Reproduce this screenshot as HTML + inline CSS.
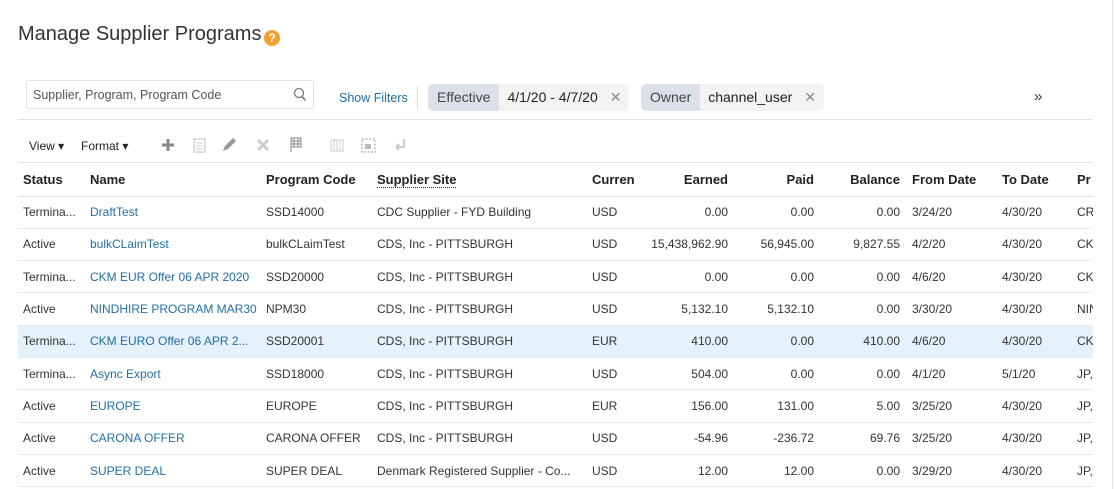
<!DOCTYPE html>
<html><head><meta charset="utf-8"><style>
*{box-sizing:border-box;margin:0;padding:0}
body{width:1115px;height:489px;overflow:hidden;background:#fff;font-family:"Liberation Sans",Arial,sans-serif;color:#333;position:relative;font-size:12px}
.abs{position:absolute;white-space:nowrap}
h1{position:absolute;left:18px;top:23px;font-size:20px;font-weight:normal;color:#333}
.help{position:absolute;left:264px;top:30px;width:16px;height:16px;border-radius:50%;background:#f0a030;color:#fff;font-size:12px;font-weight:bold;text-align:center;line-height:16px}
.search{position:absolute;left:26px;top:80px;width:288px;height:29px;border:1px solid #dde3e8;border-radius:3px;font-size:12.5px;color:#555;padding:7px 6px}
.chip{position:absolute;top:84px;height:27px;font-size:14px;line-height:27px;border-radius:5px;overflow:hidden;display:flex}
.chip .k{background:#dbe1e6;padding:0 9px;color:#444}
.chip .v{background:#f3f3f3;padding:0 8px;color:#222}
.chip .x{color:#888;margin-left:12px}
.hr{position:absolute;height:1px;background:#dde2e6}
table{position:absolute;left:18px;top:164px;border-collapse:collapse;width:1075px;table-layout:fixed}
th{font-weight:bold;font-size:13px;text-align:left;height:32px;color:#222;border-bottom:1px solid #dde2e6;padding:0 5px}
td{font-size:12px;height:32.3px;border-bottom:1px solid #e8ebee;padding:0 5px;white-space:nowrap;overflow:hidden;color:#333}
td.r,th.r{text-align:right;padding-right:2px}
th.d,td.d{padding-left:10px}
td a{color:#1f6fa8}
tr.hl td{background:#e5f1fb}
</style></head><body>
<h1>Manage Supplier Programs</h1><div class="help">?</div>
<div class="search">Supplier, Program, Program Code
<svg style="position:absolute;right:6px;top:6px" width="14" height="15" viewBox="0 0 14 15"><circle cx="6" cy="6" r="4.5" fill="none" stroke="#777" stroke-width="1.3"/><path d="M9 9.5l3.5 4" stroke="#777" stroke-width="1.6"/></svg></div>
<div class="abs" style="left:339px;top:91px;font-size:12.5px;color:#1f6fa8">Show Filters</div>
<div class="abs" style="left:417px;top:86px;width:1px;height:24px;background:#ddd"></div>
<div class="chip" style="left:428px"><span class="k">Effective</span><span class="v">4/1/20 - 4/7/20<span class="x">✕</span></span></div>
<div class="chip" style="left:641px"><span class="k">Owner</span><span class="v">channel_user<span class="x">✕</span></span></div>
<div class="abs" style="left:1034px;top:88px;font-size:15px;color:#333">»</div>
<div class="hr" style="left:18px;top:119px;width:1075px"></div>
<div class="abs" style="left:1112px;top:0;width:1px;height:489px;background:#e3e3e3"></div>
<div class="abs" style="left:29px;top:139px;font-size:12px;color:#222">View ▾</div>
<div class="abs" style="left:81px;top:139px;font-size:12px;color:#222">Format ▾</div>
<svg class="abs" style="left:160px;top:137px" width="260" height="16" viewBox="0 0 260 16">
<path d="M8 2v12M2 8h12" stroke="#888" stroke-width="3"/>
<rect x="34" y="2" width="11" height="13" fill="none" stroke="#ccc" stroke-width="1.3"/><path d="M36 6h7M36 9h7M36 12h7" stroke="#ccc"/>
<path d="M63 14l2-5 8-8 3 3-8 8z" fill="#999"/>
<path d="M98 3l10 10M108 3l-10 10" stroke="#ccc" stroke-width="3"/>
<rect x="131" y="1" width="10" height="9" fill="none" stroke="#888"/><path d="M131 4h10M131 7h10M134 1v9M138 1v9M131 15l0-5" stroke="#888"/>
<rect x="171" y="3" width="12" height="11" fill="none" stroke="#ccc"/><path d="M174 3v11M177 3v11M180 3v11" stroke="#ccc"/>
<rect x="202" y="2" width="13" height="13" fill="none" stroke="#999" stroke-dasharray="2 1.5"/><rect x="205" y="7" width="6" height="5" fill="#bbb"/>
<path d="M244 2v8h-8M236 10l3-3M236 10l3 3" stroke="#ccc" stroke-width="2" fill="none"/>
</svg>
<div class="hr" style="left:18px;top:162px;width:1075px"></div>
<table>
<colgroup><col style="width:67px"><col style="width:176px"><col style="width:111px"><col style="width:215px"><col style="width:52px"><col style="width:91px"><col style="width:86px"><col style="width:86px"><col style="width:90px"><col style="width:75px"><col style="width:26px"></colgroup>
<tr><th>Status</th><th>Name</th><th>Program Code</th><th><span style="border-bottom:1px dotted #333">Supplier Site</span></th><th>Curren</th><th class="r">Earned</th><th class="r">Paid</th><th class="r">Balance</th><th class="d">From Date</th><th class="d">To Date</th><th class="d">Pr</th></tr>
<tr><td>Termina...</td><td><a>DraftTest</a></td><td>SSD14000</td><td>CDC Supplier - FYD Building</td><td>USD</td><td class="r">0.00</td><td class="r">0.00</td><td class="r">0.00</td><td class="d">3/24/20</td><td class="d">4/30/20</td><td class="d">CR</td></tr>
<tr><td>Active</td><td><a>bulkCLaimTest</a></td><td>bulkCLaimTest</td><td>CDS, Inc - PITTSBURGH</td><td>USD</td><td class="r">15,438,962.90</td><td class="r">56,945.00</td><td class="r">9,827.55</td><td class="d">4/2/20</td><td class="d">4/30/20</td><td class="d">CK</td></tr>
<tr><td>Termina...</td><td><a>CKM EUR Offer 06 APR 2020</a></td><td>SSD20000</td><td>CDS, Inc - PITTSBURGH</td><td>USD</td><td class="r">0.00</td><td class="r">0.00</td><td class="r">0.00</td><td class="d">4/6/20</td><td class="d">4/30/20</td><td class="d">CK</td></tr>
<tr><td>Active</td><td><a>NINDHIRE PROGRAM MAR30</a></td><td>NPM30</td><td>CDS, Inc - PITTSBURGH</td><td>USD</td><td class="r">5,132.10</td><td class="r">5,132.10</td><td class="r">0.00</td><td class="d">3/30/20</td><td class="d">4/30/20</td><td class="d">NIN</td></tr>
<tr class="hl"><td>Termina...</td><td><a>CKM EURO Offer 06 APR 2...</a></td><td>SSD20001</td><td>CDS, Inc - PITTSBURGH</td><td>EUR</td><td class="r">410.00</td><td class="r">0.00</td><td class="r">410.00</td><td class="d">4/6/20</td><td class="d">4/30/20</td><td class="d">CK</td></tr>
<tr><td>Termina...</td><td><a>Async Export</a></td><td>SSD18000</td><td>CDS, Inc - PITTSBURGH</td><td>USD</td><td class="r">504.00</td><td class="r">0.00</td><td class="r">0.00</td><td class="d">4/1/20</td><td class="d">5/1/20</td><td class="d">JP,</td></tr>
<tr><td>Active</td><td><a>EUROPE</a></td><td>EUROPE</td><td>CDS, Inc - PITTSBURGH</td><td>EUR</td><td class="r">156.00</td><td class="r">131.00</td><td class="r">5.00</td><td class="d">3/25/20</td><td class="d">4/30/20</td><td class="d">JP,</td></tr>
<tr><td>Active</td><td><a>CARONA OFFER</a></td><td>CARONA OFFER</td><td>CDS, Inc - PITTSBURGH</td><td>USD</td><td class="r">-54.96</td><td class="r">-236.72</td><td class="r">69.76</td><td class="d">3/25/20</td><td class="d">4/30/20</td><td class="d">JP,</td></tr>
<tr><td>Active</td><td><a>SUPER DEAL</a></td><td>SUPER DEAL</td><td>Denmark Registered Supplier - Co...</td><td>USD</td><td class="r">12.00</td><td class="r">12.00</td><td class="r">0.00</td><td class="d">3/29/20</td><td class="d">4/30/20</td><td class="d">JP,</td></tr>
</table>
</body></html>
